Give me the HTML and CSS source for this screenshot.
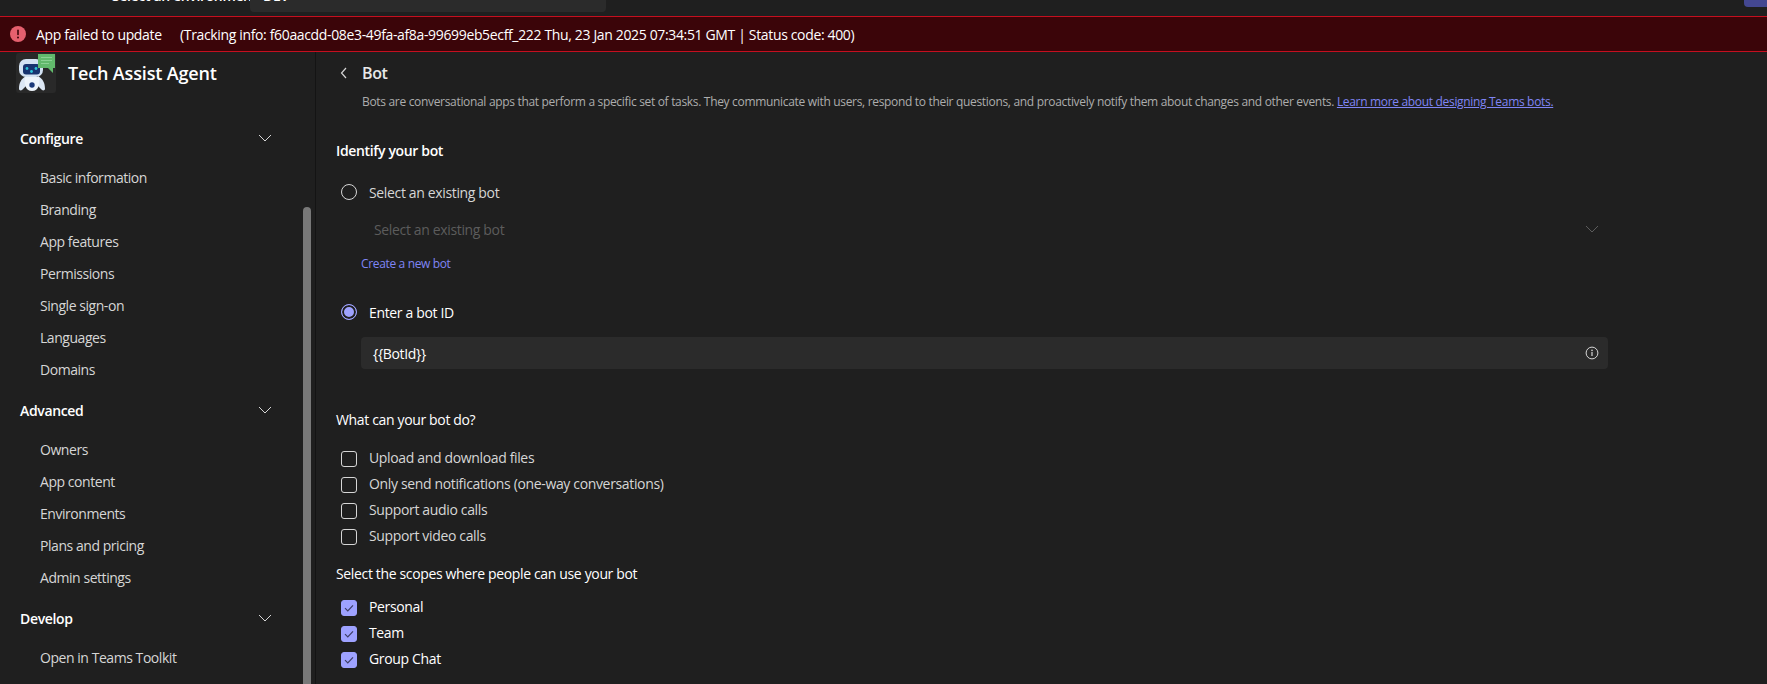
FILE: index.html
```html
<!DOCTYPE html>
<html lang="en">

<head>
  <meta charset="UTF-8">
  <title>Tech Assist Agent - Bot</title>
  <link rel="stylesheet" href="styles.css">
</head>

<body>
  <div class="topStrip">
    <span class="topStrip__label">Select an environment</span>
    <div class="topStrip__select"><span class="topStrip__value">DEV</span></div>
    <div class="topStrip__btn"></div>
  </div>

  <div class="banner">
    <svg class="banner__icon" width="16" height="16" viewBox="0 0 16 16">
      <circle cx="8" cy="8" r="8" fill="#e5606e" />
      <rect x="7.2" y="3.6" width="1.6" height="5.6" rx=".8" fill="#3b0509" />
      <circle cx="8" cy="11.4" r="1" fill="#3b0509" />
    </svg>
    <span class="banner__title">App failed to update</span>
    <span class="banner__detail">(Tracking info: f60aacdd-08e3-49fa-af8a-99699eb5ecff_222 Thu, 23 Jan 2025 07:34:51 GMT | Status code: 400)</span>
  </div>

  <div class="layout">
    <aside class="sidebar">
      <div class="sidebar__nav">
        <div class="app">
          <svg class="app__logo" width="40" height="40" viewBox="0 0 40 40">
            <rect width="40" height="40" rx="3" fill="#292929" />
            <path d="M3 36c0-6 2-10 7-13l1 9-5 5c-1 .8-3 .4-3-1zM29 36c0-6-2-10-7-13l-1 9 5 5c1 .8 3 .4 3-1z" fill="#dce7f4" />
            <path d="M9 24h14c1 6 0 14-7 14s-8-8-7-14z" fill="#eef4fb" />
            <circle cx="16" cy="32" r="2.7" fill="#1c3a7a" />
            <rect x="3" y="6" width="24" height="18" rx="7" fill="#d3e2f3" />
            <rect x="7" y="11" width="17" height="10.500" rx="3" fill="#17336f" />
            <circle cx="11" cy="15.500" r="1.400" fill="#2bc4d8" />
            <circle cx="20" cy="15.500" r="1.400" fill="#2bc4d8" />
            <circle cx="15.500" cy="18.500" r="1.400" fill="#2bc4d8" />
            <path d="M22 1h17v14h-2v5l-5-5H22z" fill="#62b96c" />
            <path d="M25 4.500h11M25 7.500h11M25 10.500h8" stroke="#8bd294" stroke-width="1.200" />
          </svg>
          <span class="app__name">Tech Assist Agent</span>
        </div>

        <div class="navGroup">
          <div class="navGroup__head">
            <span>Configure</span>
            <svg class="chevron" width="14" height="14" viewBox="0 0 14 14"><path d="M1 4l6 6 6-6" /></svg>
          </div>
          <div class="navGroup__item">Basic information</div>
          <div class="navGroup__item">Branding</div>
          <div class="navGroup__item">App features</div>
          <div class="navGroup__item">Permissions</div>
          <div class="navGroup__item">Single sign-on</div>
          <div class="navGroup__item">Languages</div>
          <div class="navGroup__item">Domains</div>
        </div>

        <div class="navGroup">
          <div class="navGroup__head">
            <span>Advanced</span>
            <svg class="chevron" width="14" height="14" viewBox="0 0 14 14"><path d="M1 4l6 6 6-6" /></svg>
          </div>
          <div class="navGroup__item">Owners</div>
          <div class="navGroup__item">App content</div>
          <div class="navGroup__item">Environments</div>
          <div class="navGroup__item">Plans and pricing</div>
          <div class="navGroup__item">Admin settings</div>
        </div>

        <div class="navGroup">
          <div class="navGroup__head">
            <span>Develop</span>
            <svg class="chevron" width="14" height="14" viewBox="0 0 14 14"><path d="M1 4l6 6 6-6" /></svg>
          </div>
          <div class="navGroup__item">Open in Teams Toolkit</div>
        </div>
      </div>
      <div class="sidebar__scroll"></div>
    </aside>

    <main class="main">
      <div class="pageHead">
        <svg class="pageHead__back" width="8" height="12" viewBox="0 0 8 12"><path d="M6 1L1.500 6 6 11" /></svg>
        <span class="pageHead__title">Bot</span>
      </div>
      <p class="pageDesc">Bots are conversational apps that perform a specific set of tasks. They communicate with users, respond to their questions, and proactively notify them about changes and other events. <a class="pageDesc__link" href="#">Learn more about designing Teams bots.</a></p>

      <h2 class="sectionHead">Identify your bot</h2>

      <div class="radioRow radioRow--first">
        <span class="radio"></span>
        <span>Select an existing bot</span>
      </div>
      <div class="dropdown">
        <span>Select an existing bot</span>
        <svg class="dropdown__chevron" width="14" height="14" viewBox="0 0 14 14"><path d="M1 4l6 6 6-6" /></svg>
      </div>
      <a class="newBot" href="#">Create a new bot</a>

      <div class="radioRow radioRow--second">
        <span class="radio radio--on"></span>
        <span class="radioRow__on">Enter a bot ID</span>
      </div>
      <div class="textField">
        <span>{{BotId}}</span>
        <svg width="14" height="14" viewBox="0 0 14 14">
          <circle cx="7" cy="7" r="5.900" fill="none" stroke="#d6d6d6" />
          <rect x="6.400" y="6" width="1.200" height="4" fill="#d6d6d6" />
          <circle cx="7" cy="4.400" r=".8" fill="#d6d6d6" />
        </svg>
      </div>

      <div class="question question--abilities">What can your bot do?</div>
      <div class="checks">
        <div class="checkRow"><span class="check"></span><span class="checkRow__label">Upload and download files</span></div>
        <div class="checkRow"><span class="check"></span><span class="checkRow__label">Only send notifications (one-way conversations)</span></div>
        <div class="checkRow"><span class="check"></span><span class="checkRow__label">Support audio calls</span></div>
        <div class="checkRow"><span class="check"></span><span class="checkRow__label">Support video calls</span></div>
      </div>

      <div class="question question--scopes">Select the scopes where people can use your bot</div>
      <div class="checks checks--scopes">
        <div class="checkRow checkRow--on">
          <span class="check check--on"><svg width="12" height="12" viewBox="0 0 12 12"><path d="M2 6.200l2.800 2.800L10 3.400" /></svg></span>
          <span class="checkRow__label">Personal</span>
        </div>
        <div class="checkRow checkRow--on">
          <span class="check check--on"><svg width="12" height="12" viewBox="0 0 12 12"><path d="M2 6.200l2.800 2.800L10 3.400" /></svg></span>
          <span class="checkRow__label">Team</span>
        </div>
        <div class="checkRow checkRow--on">
          <span class="check check--on"><svg width="12" height="12" viewBox="0 0 12 12"><path d="M2 6.200l2.800 2.800L10 3.400" /></svg></span>
          <span class="checkRow__label">Group Chat</span>
        </div>
      </div>
    </main>
  </div>
</body>

</html>
```

FILE: styles.css
```css
html {
  font-size: 14px;
}

body {
  background-color: #1f1f1f;
  color: #d6d6d6;
  font-family: "Open Sans", "Noto Sans", Arial, sans-serif;
  height: 684px;
  letter-spacing: -.35px;
  margin: 0;
  overflow: hidden;
}

.topStrip {
  color: #fff;
  display: flex;
  font-weight: 600;
  height: 16px;
  line-height: 20px;
  overflow: hidden;
}

.topStrip__label {
  margin: -14px 0 0 112px;
  white-space: nowrap;
  width: 138px;
}

.topStrip__select {
  background-color: #2b2b2b;
  border-radius: 0 0 4px 4px;
  height: 12px;
  width: 356px;
}

.topStrip__value {
  display: block;
  margin: -14px 0 0 13px;
}

.topStrip__btn {
  background-color: #444791;
  border-radius: 0 0 0 4px;
  height: 7px;
  margin-left: auto;
  width: 23px;
}

.banner {
  align-items: center;
  background-color: #3b0509;
  border-bottom: 1px solid #c50f1f;
  border-top: 1px solid #c50f1f;
  box-sizing: border-box;
  color: #fff;
  display: flex;
  height: 36px;
  padding-left: 10px;
}

.banner__icon {
  flex: none;
}

.banner__title {
  margin-left: 10px;
  white-space: nowrap;
  width: 144px;
}

.banner__detail {
  white-space: nowrap;
}

.layout {
  display: flex;
  height: 632px;
}

.sidebar {
  border-right: 1px solid #141414;
  display: flex;
  flex: none;
  width: 315px;
}

.sidebar__nav {
  width: 303px;
}

.sidebar__scroll {
  background-color: #787878;
  border-radius: 4px 4px 0 0;
  margin-top: 155px;
  width: 8px;
}

.app {
  align-items: center;
  display: flex;
  height: 42px;
  margin-bottom: 28px;
  padding-left: 16px;
}

.app__name {
  color: #fff;
  font-size: 18px;
  font-weight: 600;
  letter-spacing: -.15px;
  margin-left: 12px;
}

.navGroup {
  margin-bottom: 8px;
}

.navGroup__head {
  align-items: center;
  color: #fff;
  display: flex;
  font-weight: 600;
  height: 32px;
  justify-content: space-between;
  margin-bottom: 8px;
  padding: 0 31px 0 20px;
}

.navGroup__item {
  height: 32px;
  letter-spacing: -.45px;
  line-height: 32px;
  padding-left: 40px;
}

.chevron {
  fill: none;
  stroke: #d6d6d6;
}

.main {
  flex: 1;
  padding: 11px 0 0 20px;
}

.pageHead {
  align-items: center;
  display: flex;
  height: 20px;
}

.pageHead__back {
  fill: none;
  margin-left: 4px;
  stroke: #d6d6d6;
  stroke-width: 1.2;
}

.pageHead__title {
  color: #e8e8e8;
  font-size: 16px;
  font-weight: 600;
  margin-left: 14px;
}

.pageDesc {
  color: #adadad;
  font-size: 12px;
  letter-spacing: -.32px;
  line-height: 16px;
  margin: 11px 0 0 26px;
  white-space: nowrap;
}

.pageDesc__link {
  color: #7f85f5;
}

.sectionHead {
  color: #fff;
  font-size: 14px;
  font-weight: 600;
  line-height: 20px;
  margin: 31px 0 0;
}

.radioRow {
  align-items: center;
  display: flex;
  height: 20px;
  padding-left: 5px;
}

.radioRow--first {
  margin-top: 21px;
}

.radioRow--second {
  margin-top: 30px;
}

.radioRow__on {
  color: #fff;
}

.radio {
  border: 1px solid #d6d6d6;
  border-radius: 50%;
  box-sizing: border-box;
  flex: none;
  height: 16px;
  margin-right: 12px;
  width: 16px;
}

.radio--on {
  background-color: #9ea2ff;
  border-color: #9ea2ff;
  box-shadow: inset 0 0 0 2px #1f1f1f;
}

.dropdown {
  align-items: center;
  box-sizing: border-box;
  color: #5c5c5c;
  display: flex;
  height: 32px;
  justify-content: space-between;
  margin: 11px 0 0 25px;
  padding: 0 9px 0 13px;
  width: 1247px;
}

.dropdown__chevron {
  fill: none;
  stroke: #5c5c5c;
}

.newBot {
  color: #7f85f5;
  display: block;
  font-size: 12px;
  line-height: 16px;
  margin: 11px 0 0 25px;
  text-decoration: none;
}

.textField {
  align-items: center;
  background-color: #2b2b2b;
  border-radius: 4px;
  box-sizing: border-box;
  color: #fff;
  display: flex;
  height: 32px;
  justify-content: space-between;
  margin: 15px 0 0 25px;
  padding: 0 9px 0 12px;
  width: 1247px;
}

.question {
  color: #fff;
  line-height: 20px;
}

.question--abilities {
  margin-top: 41px;
}

.question--scopes {
  margin-top: 14px;
}

.checks {
  margin-top: 16px;
}

.checks--scopes {
  margin-top: 11px;
}

.checkRow {
  align-items: center;
  display: flex;
  height: 26px;
  padding-left: 5px;
}

.checkRow--on {
  color: #fff;
}

.checkRow__label {
  margin-bottom: 3px;
}

.check {
  align-items: center;
  border: 1px solid #d6d6d6;
  border-radius: 3px;
  box-sizing: border-box;
  display: flex;
  flex: none;
  height: 16px;
  justify-content: center;
  margin-right: 12px;
  width: 16px;
}

.check--on {
  background-color: #9ea2ff;
  border-color: #9ea2ff;
}

.check--on svg {
  fill: none;
  stroke: #3d3e66;
  stroke-width: 1.2;
}
```
